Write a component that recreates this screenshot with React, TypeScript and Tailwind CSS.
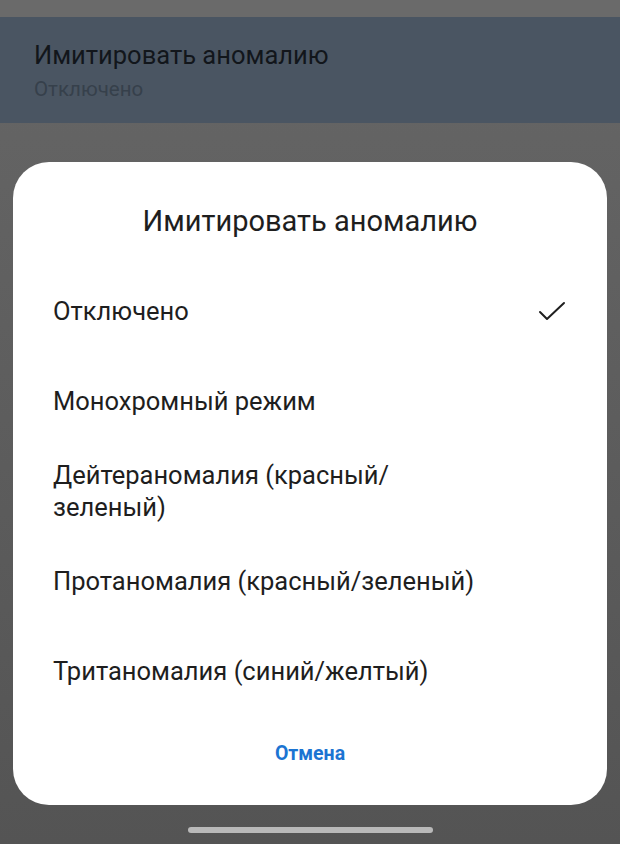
const OPTIONS = [
  ["Отключено"],
  ["Монохромный режим"],
  ["Дейтераномалия (красный/", "зеленый)"],
  ["Протаномалия (красный/зеленый)"],
  ["Тританомалия (синий/желтый)"],
]

function Check() {
  return (
    <svg width="28" height="20" viewBox="0 0 28 20" fill="none">
      <path d="M2 11 L9 18 L26 2" stroke="#1f1f1f" strokeWidth="2" strokeLinecap="round" strokeLinejoin="round" />
    </svg>
  )
}

export default function App() {
  const selected = 0
  return (
    <div
      className="flex h-[844px] w-[620px] flex-col overflow-hidden bg-gradient-to-b from-[#666666] to-[#545454]"
      style={{ fontFamily: "Roboto, 'Noto Sans', sans-serif" }}
    >
      <div className="h-[17px] bg-[#6a6a6a]" />
      <div className="flex h-[106px] flex-col bg-[#4a5562] pl-[34px] pt-[23px]">
        <div className="text-[25.5px] leading-[30px] text-[#12161b]">Имитировать аномалию</div>
        <div className="mt-[7px] text-[20.5px] leading-[24px] text-[#36404b]">Отключено</div>
      </div>
      <div className="h-[39px]" />
      <div className="mx-[13px] flex h-[643px] flex-col rounded-[36px] bg-white">
        <div className="pt-[41px] text-center text-[29px] leading-[36px] text-[#1e1e1e]">
          Имитировать аномалию
        </div>
        <ul className="mt-[27px] flex flex-col">
          {OPTIONS.map((lines, i) => (
            <li key={lines[0]} className="flex h-[90px] items-center justify-between pl-[40px] pr-[41px]">
              <span className="whitespace-nowrap text-[25.5px] leading-[32px] text-[#1e1e1e]">
                {lines.map((line) => (
                  <span key={line} className="block">
                    {line}
                  </span>
                ))}
              </span>
              {i === selected && <Check />}
            </li>
          ))}
        </ul>
        <div className="mt-[24px] text-center text-[19.5px] font-bold leading-[28px] text-[#1b74d2]">
          Отмена
        </div>
      </div>
      <div className="flex flex-1 items-start justify-center pt-[22px]">
        <div className="h-[6px] w-[245px] rounded-full bg-[#b9b9b9]" />
      </div>
    </div>
  )
}
